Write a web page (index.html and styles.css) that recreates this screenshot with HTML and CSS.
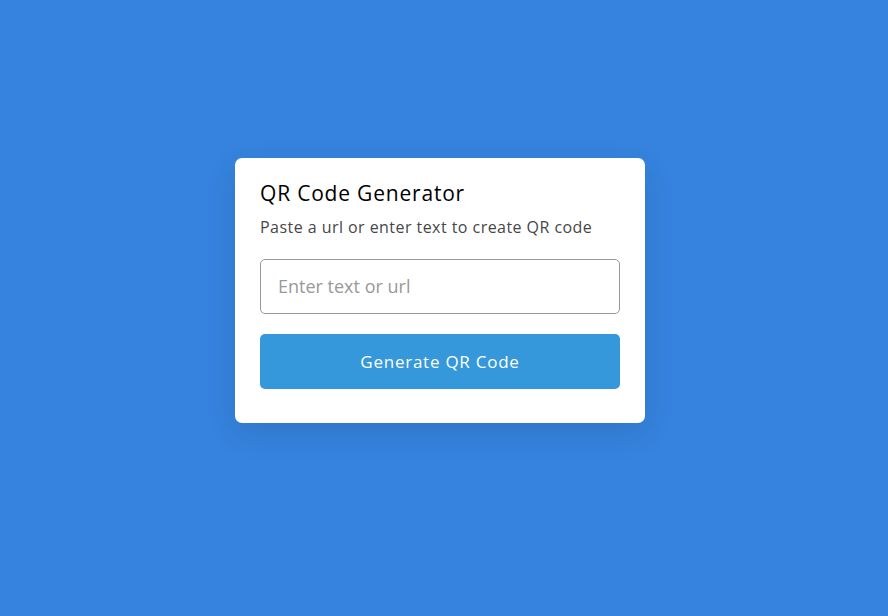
FILE: index.html
```html
<!DOCTYPE html>
<html lang="en">
<head>
<meta charset="utf-8">
<title>QR Code Generator</title>
<link rel="stylesheet" href="styles.css">
</head>
<body>
<div class="wrapper">
  <header>
    <h1>QR Code Generator</h1>
    <p>Paste a url or enter text to create QR code</p>
  </header>
  <div class="form">
    <input type="text" placeholder="Enter text or url">
    <button>Generate QR Code</button>
  </div>
</div>
</body>
</html>
```
FILE: styles.css
```css
* {
  margin: 0;
  padding: 0;
  box-sizing: border-box;
  font-family: "Open Sans", "Noto Sans", sans-serif;
}
body {
  display: flex;
  align-items: center;
  justify-content: center;
  min-height: 100vh;
  padding: 0 8px 35px 0;
  background: #3583de;
}
.wrapper {
  height: 265px;
  width: 410px;
  background: #fff;
  border-radius: 7px;
  padding: 20px 25px 0;
  box-shadow: 0 10px 30px rgba(0, 0, 0, 0.1);
}
header h1 {
  font-size: 21px;
  font-weight: 500;
  line-height: 31.5px;
  letter-spacing: 0.8px;
  color: #000;
}
header p {
  margin-top: 5px;
  color: #474747;
  font-size: 16px;
  line-height: 24px;
  letter-spacing: 0.45px;
}
.form {
  margin: 20px 0 25px;
}
.form input,
.form button {
  display: block;
  width: 100%;
  height: 55px;
  border: none;
  outline: none;
  border-radius: 5px;
}
.form input {
  font-size: 18px;
  padding: 0 17px;
  border: 1px solid #999;
  color: #333;
}
.form input::placeholder {
  color: #999;
}
.form button {
  color: #fff;
  margin-top: 20px;
  font-size: 17px;
  letter-spacing: 0.75px;
  background: #3498db;
}
```
